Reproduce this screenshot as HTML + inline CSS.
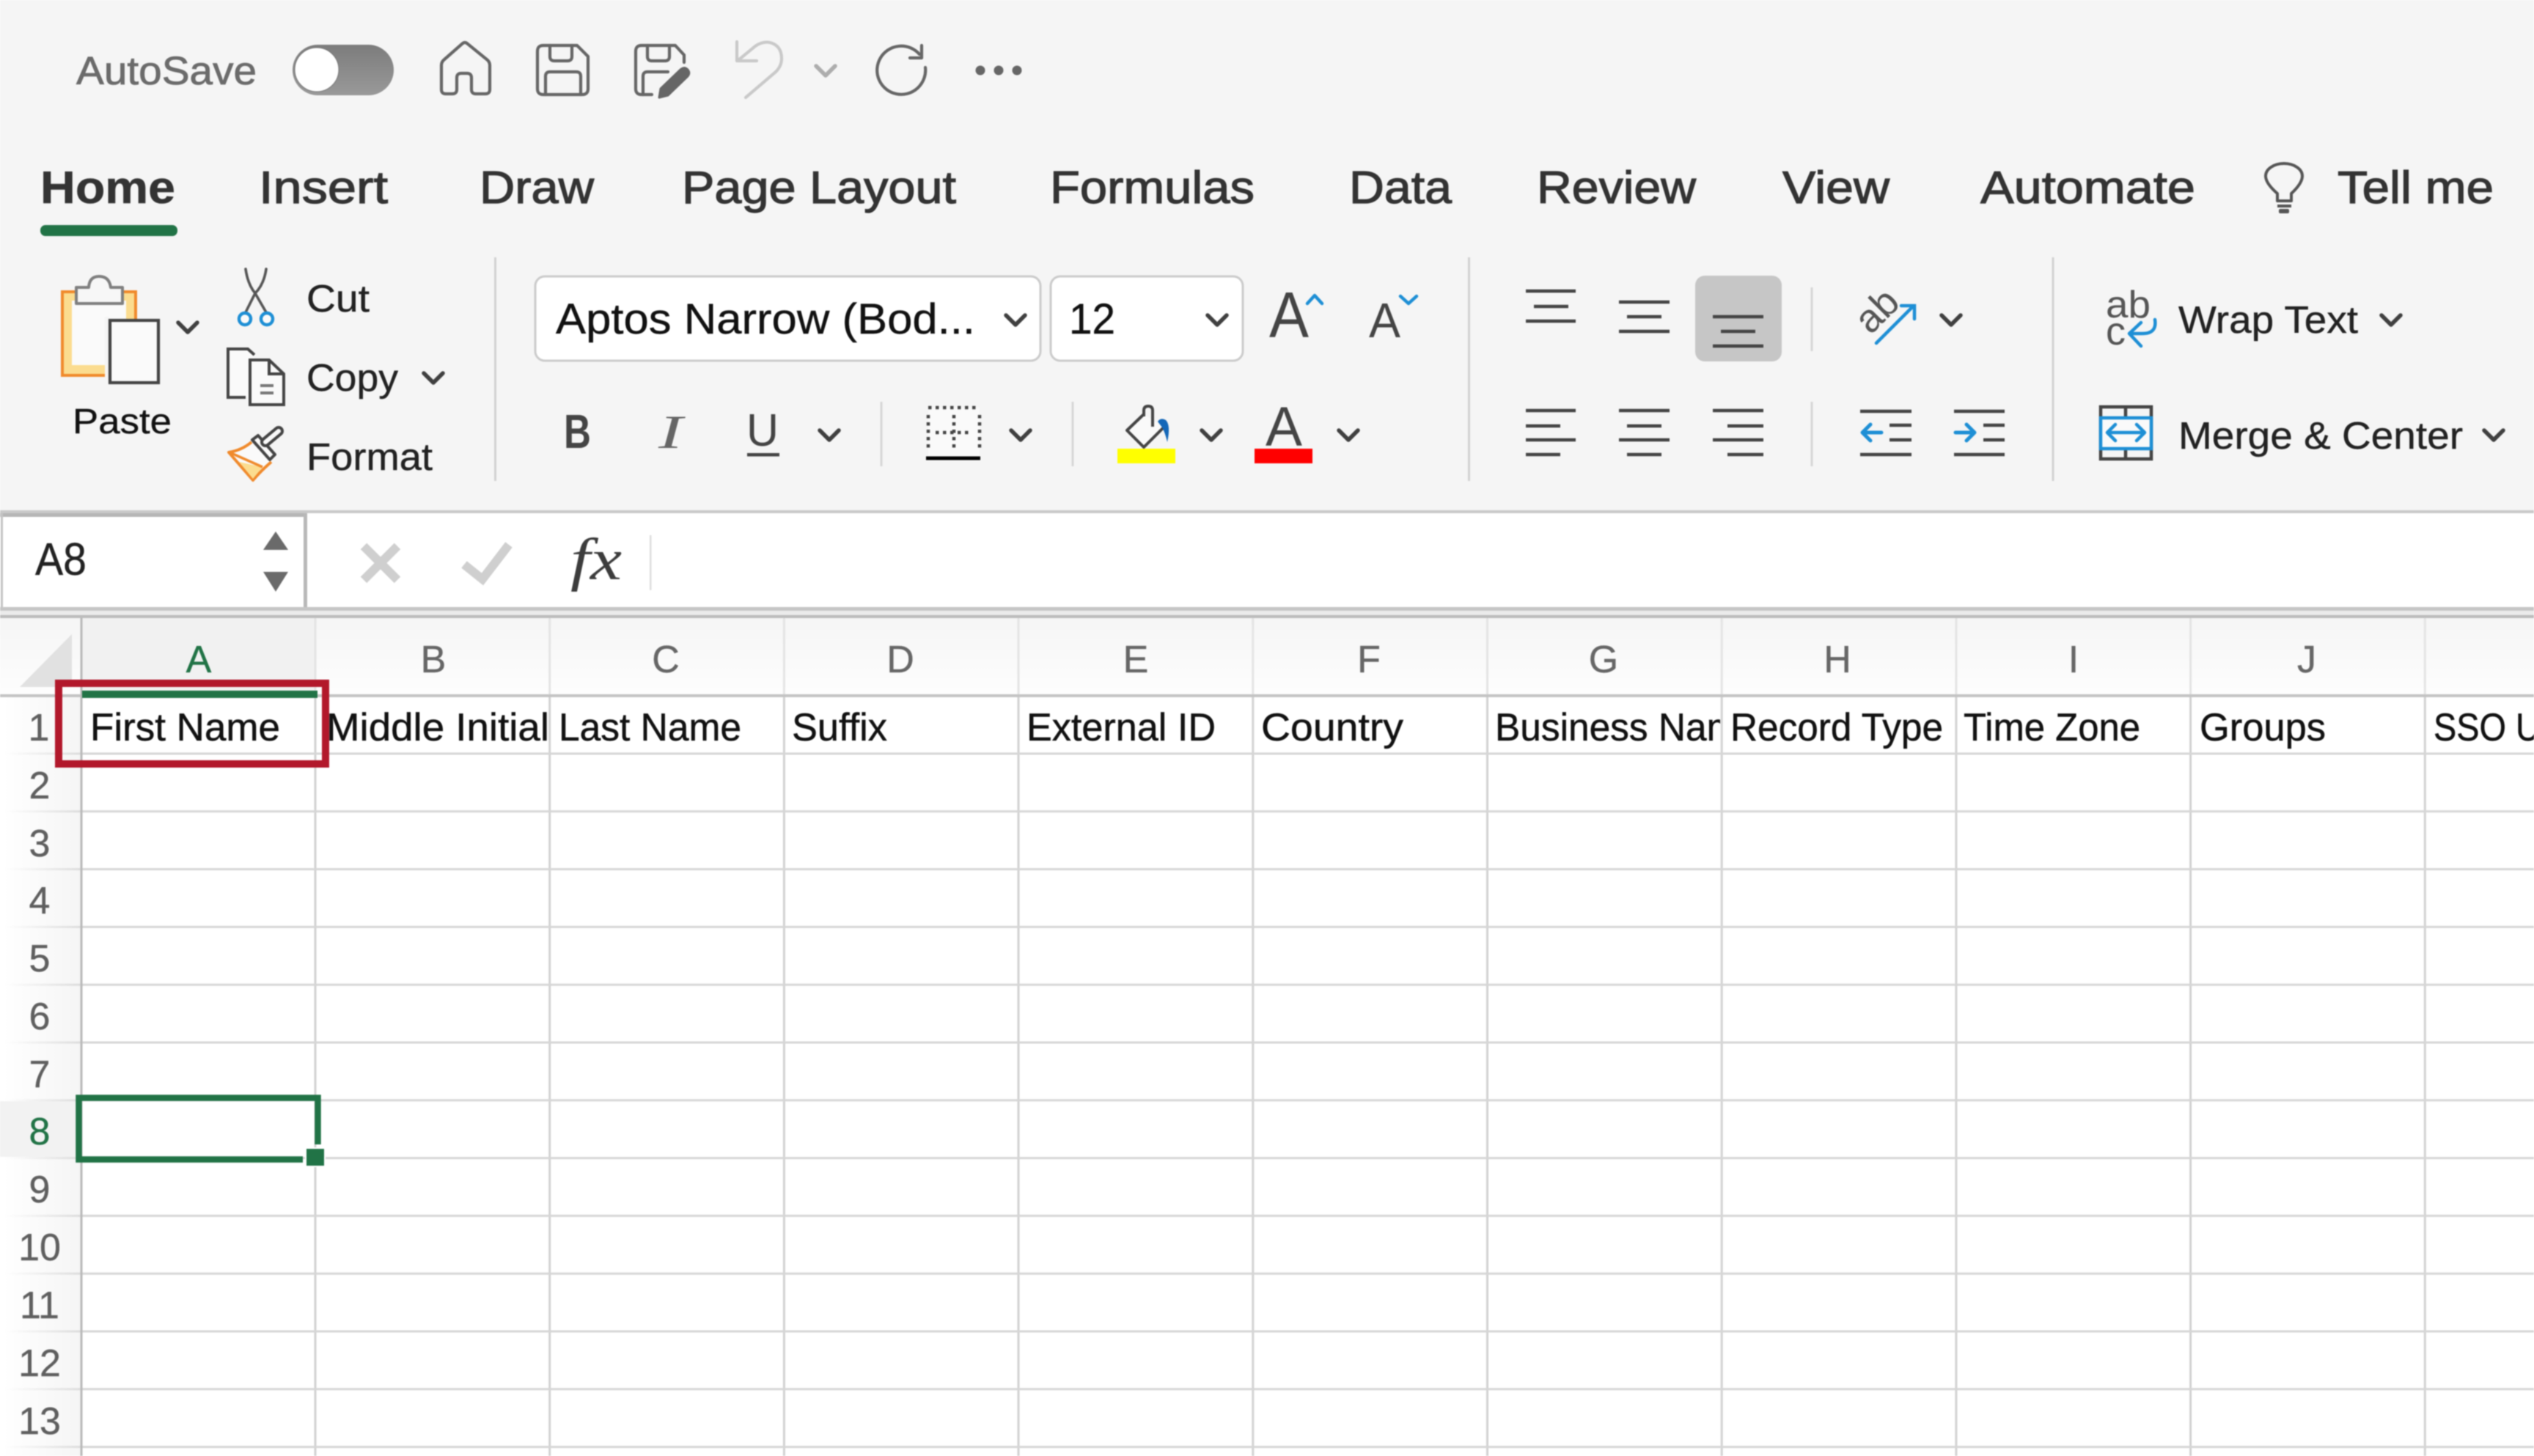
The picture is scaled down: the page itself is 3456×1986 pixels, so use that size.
<!DOCTYPE html>
<html lang="en">
<head>
<meta charset="utf-8">
<title>Excel</title>
<style>
html,body{margin:0;padding:0;width:3456px;height:1986px;overflow:hidden;background:#fff}
svg{display:block;position:absolute;left:0;top:0;filter:blur(.9px)}
text{font-family:"Liberation Sans",sans-serif}
.tab{font-size:62px;fill:#333;stroke:#333;stroke-width:1.2px}
.rb{font-size:52px;fill:#222;stroke:#222;stroke-width:.4px}
.cell{font-size:53px;fill:#111;stroke:#111;stroke-width:.5px}
.col{font-size:52px;fill:#666;text-anchor:middle;stroke:#666;stroke-width:.4px}
.row{font-size:52px;fill:#5f5f5f;text-anchor:middle;stroke:#5f5f5f;stroke-width:.4px}
</style>
</head>
<body>
<svg xmlns="http://www.w3.org/2000/svg" width="3456" height="1986" viewBox="0 0 3456 1986">
<defs>
<linearGradient id="hdr" x1="0" y1="0" x2="0" y2="1"><stop offset="0" stop-color="#f5f5f5"/><stop offset="1" stop-color="#fdfdfd"/></linearGradient>
<linearGradient id="rowh" x1="0" y1="0" x2="1" y2="0"><stop offset="0" stop-color="#ffffff"/><stop offset="1" stop-color="#f5f5f5"/></linearGradient>
<linearGradient id="fade" x1="0" y1="0" x2="1" y2="0"><stop offset="0" stop-color="#ffffff"/><stop offset="1" stop-color="#dcdcdc"/></linearGradient>
<linearGradient id="tog" x1="0" y1="0" x2="0" y2="1"><stop offset="0" stop-color="#7c7c7c"/><stop offset="1" stop-color="#999"/></linearGradient>
<path id="ch" d="M-13 -7L0 6L13 -7" fill="none" stroke="#404040" stroke-width="5.5" stroke-linecap="round" stroke-linejoin="round"/>
<clipPath id="biz"><rect x="2030" y="950" width="316" height="78"/></clipPath>
<clipPath id="mid"><rect x="440" y="950" width="309" height="78"/></clipPath>
</defs>

<!-- ribbon bg -->
<rect x="0" y="0" width="3456" height="698" fill="#f5f5f5"/>

<!-- quick access -->
<text x="104" y="115" font-size="54" fill="#6b6b6b" stroke="#6b6b6b" stroke-width=".8" textLength="246" lengthAdjust="spacingAndGlyphs">AutoSave</text>
<rect x="399" y="61" width="138" height="69" rx="34.5" fill="url(#tog)"/>
<circle cx="432" cy="95" r="30" fill="#ffffff" stroke="#777" stroke-width="1"/>
<g fill="none" stroke="#666" stroke-width="4.2" stroke-linejoin="round" stroke-linecap="round">
<path d="M630 60Q634 56 638 60L665 82Q668 85 668 89V122Q668 128 662 128H649Q643 128 643 122V106Q643 100 637 100H629Q623 100 623 106V122Q623 128 617 128H608Q602 128 602 122V89Q602 85 605 82Z"/>
<path d="M741 62H787L802 77V121Q802 129 794 129H741Q733 129 733 121V70Q733 62 741 62Z"/>
<path d="M750 62V77Q750 83 756 83H774Q780 83 780 77V62"/>
<path d="M744 129V104Q744 98 750 98H786Q792 98 792 104V129"/>
<path d="M889 129H875Q867 129 867 121V70Q867 62 875 62H921L933 75V85"/>
<path d="M883 62V77Q883 83 889 83H907Q913 83 913 77V62"/>
<path d="M877 129V104Q877 98 883 98H911"/>
<path d="M1262 92A33 33 0 1 1 1254 74"/>
<path d="M1257 62V79H1241"/>
</g>
<path d="M899 133L901 121L927 96Q933 90 938 95Q942 100 937 105L911 130Z" fill="#666" stroke="#666" stroke-width="3" stroke-linejoin="round"/>
<g fill="none" stroke="#c9c9c9" stroke-width="4.2" stroke-linecap="round" stroke-linejoin="round">
<path d="M1005 57V83H1032"/>
<path d="M1007 82L1030 63Q1040 56 1050 58Q1066 62 1066 80Q1066 90 1058 98L1017 133"/>
</g>
<use href="#ch" x="1126" y="97" style="opacity:.4"/>
<circle cx="1337" cy="96" r="6.5" fill="#666"/><circle cx="1362" cy="96" r="6.5" fill="#666"/><circle cx="1387" cy="96" r="6.5" fill="#666"/>

<!-- tabs -->
<text x="55" y="277" class="tab" font-weight="bold" textLength="184" lengthAdjust="spacingAndGlyphs" style="stroke-width:.6px">Home</text>
<rect x="55" y="307" width="187" height="15" rx="7" fill="#217346"/>
<text x="353" y="277" class="tab" textLength="176" lengthAdjust="spacingAndGlyphs">Insert</text>
<text x="654" y="277" class="tab" textLength="156" lengthAdjust="spacingAndGlyphs">Draw</text>
<text x="930" y="277" class="tab" textLength="374" lengthAdjust="spacingAndGlyphs">Page Layout</text>
<text x="1432" y="277" class="tab" textLength="279" lengthAdjust="spacingAndGlyphs">Formulas</text>
<text x="1840" y="277" class="tab" textLength="140" lengthAdjust="spacingAndGlyphs">Data</text>
<text x="2096" y="277" class="tab" textLength="217" lengthAdjust="spacingAndGlyphs">Review</text>
<text x="2431" y="277" class="tab" textLength="146" lengthAdjust="spacingAndGlyphs">View</text>
<text x="2701" y="277" class="tab" textLength="293" lengthAdjust="spacingAndGlyphs">Automate</text>
<text x="3188" y="277" class="tab" textLength="213" lengthAdjust="spacingAndGlyphs">Tell me</text>
<g fill="none" stroke="#555" stroke-width="4" stroke-linejoin="round">
<path d="M3106 270V260Q3090 246 3090 236A25 17 0 0 1 3140 236Q3140 246 3125 260V270Z" transform="translate(0,4)"/>
<path d="M3106 281H3125" stroke-width="4"/>
</g>
<rect x="3108" y="285" width="14" height="6" rx="2" fill="#555"/>

<!-- clipboard -->
<rect x="85" y="398" width="100" height="114" fill="#fbdc8f" stroke="#f08a2c" stroke-width="4"/>
<rect x="98" y="410" width="74" height="88" fill="#fafafa"/>
<rect x="172" y="410" width="11" height="28" fill="#fbdc8f"/>
<path d="M104 392H121Q122 377 135 377Q149 377 151 392H167V414H104Z" fill="#f7f7f7" stroke="#7f7f7f" stroke-width="4" stroke-linejoin="round"/>
<rect x="143" y="432" width="6" height="92" fill="#f5f5f5"/>
<rect x="150" y="437" width="66" height="85" fill="#fafafa" stroke="#444" stroke-width="4.2"/>
<use href="#ch" x="256" y="447"/>
<text x="99" y="591" class="rb" textLength="135" lengthAdjust="spacingAndGlyphs" style="font-size:48px;fill:#111">Paste</text>

<!-- scissors -->
<g fill="none" stroke="#555" stroke-width="3.6" stroke-linecap="round">
<path d="M335 367Q338 388 348 400L363 426"/>
<path d="M363 367Q360 388 348 400L335 426"/>
</g>
<circle cx="334" cy="435" r="8" fill="#fafafa" stroke="#1e8fd5" stroke-width="4.4"/>
<circle cx="364" cy="435" r="8" fill="#fafafa" stroke="#1e8fd5" stroke-width="4.4"/>
<text x="418" y="425" class="rb" textLength="86" lengthAdjust="spacingAndGlyphs">Cut</text>

<!-- copy -->
<g stroke="#444" stroke-width="4" stroke-linejoin="miter">
<path d="M335 542H311V476H338L347 483V491H341V542Z" fill="#fafafa" stroke="none"/>
<path d="M335 542H311V476H338L347 484" fill="none"/>
<path d="M341 491H367L387 510V552H341Z" fill="#fafafa"/>
<path d="M367 491V510H387" fill="none"/>
</g>
<path d="M355 526H373M355 536H373" stroke="#777" stroke-width="4"/>
<text x="418" y="533" class="rb" textLength="125" lengthAdjust="spacingAndGlyphs">Copy</text>
<use href="#ch" x="591" y="516"/>

<!-- format painter -->
<path d="M343 603Q330 614 312 617L345 655Q356 642 370 630" fill="#fafafa" stroke="#f08a2c" stroke-width="4" stroke-linejoin="round"/>
<path d="M326 630L358 637L345 653Z" fill="#fbdc8f"/>
<path d="M313 617L358 637" stroke="#f08a2c" stroke-width="3.5"/>
<path d="M344 600L352 594L375 620L368 627Z" fill="#fafafa" stroke="#444" stroke-width="4" stroke-linejoin="round"/>
<path d="M362 603L380 588" stroke="#444" stroke-width="14" stroke-linecap="round"/>
<path d="M362 603L380 588" stroke="#fafafa" stroke-width="6" stroke-linecap="round"/>
<text x="418" y="641" class="rb" textLength="172" lengthAdjust="spacingAndGlyphs">Format</text>

<!-- separators -->
<path d="M675.5 351V656M2003.5 351V656M2800 351V656" stroke="#d2d2d2" stroke-width="3"/>
<path d="M1202 548V636M1463 548V636M2471 392V479M2471 548V636" stroke="#d6d6d6" stroke-width="3"/>

<!-- font boxes -->
<rect x="730" y="377" width="689" height="115" rx="13" fill="#fff" stroke="#cbcbcb" stroke-width="3"/>
<rect x="1433" y="377" width="262" height="115" rx="13" fill="#fff" stroke="#cbcbcb" stroke-width="3"/>
<text x="758" y="455" font-size="58" fill="#111" stroke="#111" stroke-width=".4" textLength="572" lengthAdjust="spacingAndGlyphs">Aptos Narrow (Bod...</text>
<text x="1458" y="455" font-size="58" fill="#111" stroke="#111" stroke-width=".4" textLength="63" lengthAdjust="spacingAndGlyphs">12</text>
<use href="#ch" x="1385" y="437"/>
<use href="#ch" x="1660" y="437"/>

<!-- grow / shrink -->
<text x="1731" y="460" font-size="88" fill="#444" textLength="54" lengthAdjust="spacingAndGlyphs">A</text>
<text x="1867" y="460" font-size="67" fill="#444" textLength="43" lengthAdjust="spacingAndGlyphs">A</text>
<path d="M1783 414L1793 403L1803 414M1910 404L1921 414L1932 404" fill="none" stroke="#1e8fd5" stroke-width="4.5" stroke-linecap="round" stroke-linejoin="round"/>

<!-- BIU -->
<text x="769" y="611" font-size="65" font-weight="bold" fill="#444" textLength="37" lengthAdjust="spacingAndGlyphs">B</text>
<text x="898" y="611" font-size="65" fill="#666" style="font-family:'Liberation Serif',serif;font-style:italic" textLength="33" lengthAdjust="spacingAndGlyphs">I</text>
<text x="1018" y="608" font-size="62" fill="#444" textLength="44" lengthAdjust="spacingAndGlyphs">U</text>
<rect x="1019" y="618" width="44" height="4.5" fill="#444"/>
<use href="#ch" x="1131" y="594"/>

<!-- borders -->
<rect x="1266" y="556" width="70" height="69" fill="#fafafa"/>
<path d="M1266 556H1336M1266 566V616M1336 566V616M1301 566V616M1276 590H1326" fill="none" stroke="#444" stroke-width="4.5" stroke-dasharray="4.5 5.5"/>
<rect x="1263" y="622.5" width="74" height="5" fill="#000"/>
<use href="#ch" x="1392" y="594"/>

<!-- fill color -->
<path d="M1560 565L1537 587L1560 610L1587 583" fill="#fafafa" stroke="#444" stroke-width="4" stroke-linejoin="round"/>
<path d="M1560 568V560Q1560 554 1566 554Q1572 554 1572 560V582" fill="none" stroke="#444" stroke-width="4"/>
<path d="M1579 575Q1583 569 1590 573Q1597 580 1592 603Q1589 590 1585 583Z" fill="#1467b8"/>
<rect x="1524" y="612" width="79" height="20" fill="#ffff00"/>
<use href="#ch" x="1652" y="594"/>

<!-- font colour -->
<text x="1726" y="608" font-size="76" fill="#444" textLength="50" lengthAdjust="spacingAndGlyphs">A</text>
<rect x="1711" y="612" width="79" height="20" fill="#ff0000"/>
<use href="#ch" x="1839" y="594"/>

<!-- alignment -->
<rect x="2312" y="376" width="118" height="117" rx="13" fill="#c6c6c6"/>
<g stroke="#444" stroke-width="4.4">
<path d="M2081 397H2149M2092 418H2139M2081 438H2149"/>
<path d="M2208 412H2277M2219 432H2266M2208 452H2277"/>
<path d="M2336 432H2405M2347 452H2394M2336 472H2405"/>
<path d="M2081 560H2149M2081 581H2128M2081 600H2149M2081 620H2128"/>
<path d="M2208 560H2277M2219 581H2266M2208 600H2277M2219 620H2266"/>
<path d="M2336 560H2405M2356 581H2405M2336 600H2405M2356 620H2405"/>
<path d="M2537 561H2607M2577 580H2607M2577 600H2607M2537 620H2607"/>
<path d="M2665 561H2734M2705 580H2734M2705 600H2734M2665 620H2734"/>
</g>
<g fill="none" stroke="#1e8fd5" stroke-width="5" stroke-linecap="round" stroke-linejoin="round">
<path d="M2566 590H2540M2551 579L2540 590L2551 601"/>
<path d="M2667 590H2693M2682 579L2693 590L2682 601"/>
</g>

<!-- orientation -->
<text x="2559" y="442" font-size="54" fill="#555" text-anchor="middle" transform="rotate(-45 2559 423)">ab</text>
<path d="M2559 468L2610 417M2593 417H2611V435" fill="none" stroke="#1e8fd5" stroke-width="4.5" stroke-linecap="round"/>
<use href="#ch" x="2661" y="437"/>

<!-- wrap text -->
<text x="2872" y="433" font-size="52" fill="#555" textLength="61" lengthAdjust="spacingAndGlyphs">ab</text>
<text x="2872" y="470" font-size="54" fill="#555">c</text>
<path d="M2939 436Q2942 455 2922 455H2904M2920 440L2904 455L2920 472" fill="none" stroke="#1e8fd5" stroke-width="4.5" stroke-linecap="round" stroke-linejoin="round"/>
<text x="2971" y="454" class="rb" textLength="245" lengthAdjust="spacingAndGlyphs">Wrap Text</text>
<use href="#ch" x="3261" y="437"/>

<!-- merge -->
<rect x="2865" y="570" width="69" height="42" fill="#fafafa"/>
<rect x="2865" y="555" width="69" height="71" fill="none" stroke="#444" stroke-width="4.5"/>
<path d="M2899 555V570M2899 612V626" stroke="#444" stroke-width="4.5"/>
<rect x="2865" y="570" width="69" height="42" fill="#fafafa" stroke="#1e8fd5" stroke-width="4.5"/>
<path d="M2875 590H2924M2885 579L2874 590L2885 601M2914 579L2925 590L2914 601" fill="none" stroke="#1e8fd5" stroke-width="4.5" stroke-linecap="round" stroke-linejoin="round"/>
<text x="2971" y="612" class="rb" textLength="388" lengthAdjust="spacingAndGlyphs">Merge &amp; Center</text>
<use href="#ch" x="3401" y="594"/>

<!-- formula bar -->
<rect x="0" y="696" width="3456" height="4" fill="#c9c9c9"/>
<rect x="0" y="700" width="3456" height="130" fill="#fff"/>
<rect x="0" y="700" width="418" height="5" fill="#b5b5b5"/>
<rect x="1" y="700" width="3" height="128" fill="#c4c4c4"/>
<rect x="414" y="700" width="5" height="130" fill="#b8b8b8"/>
<text x="48" y="784" font-size="62" fill="#222" stroke="#222" stroke-width=".4" textLength="70" lengthAdjust="spacingAndGlyphs">A8</text>
<path d="M376 725L393 750H359Z" fill="#6a6a6a"/>
<path d="M376 807L393 780H359Z" fill="#6a6a6a"/>
<path d="M496 745L542 791M542 745L496 791" stroke="#cfcfcf" stroke-width="12"/>
<path d="M633 770L658 790L694 743" fill="none" stroke="#cfcfcf" stroke-width="12"/>
<text x="778" y="790" font-size="80" fill="#3c3c3c" style="font-family:'Liberation Serif',serif;font-style:italic" textLength="70" lengthAdjust="spacingAndGlyphs">fx</text>
<rect x="886" y="730" width="2.5" height="75" fill="#dedede"/>
<rect x="0" y="828" width="3456" height="5" fill="#c6c6c6"/>
<rect x="0" y="833" width="3456" height="6" fill="#ebebeb"/>
<rect x="0" y="839" width="3456" height="4" fill="#bcbcbc"/>

<!-- sheet -->
<rect x="0" y="843" width="3456" height="1143" fill="#fff"/>
<rect x="0" y="843" width="3456" height="105" fill="url(#hdr)"/>
<rect x="112" y="843" width="318" height="105" fill="#f1f1f1"/>
<rect x="0" y="948" width="110" height="1038" fill="url(#rowh)"/>
<rect x="0" y="1502" width="110" height="76" fill="#f2f2f2"/>
<path d="M98 865V937H27Z" fill="#e1e1e1"/>

<!-- vertical grid -->
<path d="M430 843V948M749.7 843V948M1069.4 843V948M1389 843V948M1708.8 843V948M2028.5 843V948M2348.2 843V948M2667.9 843V948M2987.6 843V948M3307.3 843V948" stroke="#e4e4e4" stroke-width="3"/>
<path d="M430 948V1986M749.7 948V1986M1069.4 948V1986M1389 948V1986M1708.8 948V1986M2028.5 948V1986M2348.2 948V1986M2667.9 948V1986M2987.6 948V1986M3307.3 948V1986" stroke="#d2d2d2" stroke-width="3"/>
<!-- horizontal grid -->
<rect x="0" y="947" width="3456" height="4" fill="#c4c4c4"/>
<path d="M111 1028H3456M111 1106.8H3456M111 1185.6H3456M111 1264.4H3456M111 1343.2H3456M111 1422H3456M111 1500.8H3456M111 1579.6H3456M111 1658.4H3456M111 1737.2H3456M111 1816H3456M111 1894.8H3456M111 1973.6H3456" stroke="#d6d6d6" stroke-width="3"/>
<g fill="url(#fade)">
<rect x="5" y="1026.5" width="106" height="3"/><rect x="5" y="1105.3" width="106" height="3"/><rect x="5" y="1184.1" width="106" height="3"/><rect x="5" y="1262.9" width="106" height="3"/><rect x="5" y="1341.7" width="106" height="3"/><rect x="5" y="1420.5" width="106" height="3"/><rect x="5" y="1499.3" width="106" height="3"/><rect x="5" y="1578.1" width="106" height="3"/><rect x="5" y="1656.9" width="106" height="3"/><rect x="5" y="1735.7" width="106" height="3"/><rect x="5" y="1814.5" width="106" height="3"/><rect x="5" y="1893.3" width="106" height="3"/><rect x="5" y="1972.1" width="106" height="3"/>
</g>
<rect x="109.5" y="843" width="3" height="1143" fill="#b9b9b9"/>

<!-- column headers -->
<text x="271" y="917" class="col" style="fill:#217346;stroke:#217346">A</text>
<text x="591" y="917" class="col">B</text>
<text x="908" y="917" class="col">C</text>
<text x="1228" y="917" class="col">D</text>
<text x="1549" y="917" class="col">E</text>
<text x="1867" y="917" class="col">F</text>
<text x="2187" y="917" class="col">G</text>
<text x="2506" y="917" class="col">H</text>
<text x="2828" y="917" class="col">I</text>
<text x="3146" y="917" class="col">J</text>
<text x="3470" y="917" class="col">K</text>

<!-- row headers -->
<text x="53" y="1010" class="row">1</text>
<text x="54" y="1089" class="row">2</text>
<text x="54" y="1168" class="row">3</text>
<text x="54" y="1246" class="row">4</text>
<text x="54" y="1325" class="row">5</text>
<text x="54" y="1404" class="row">6</text>
<text x="54" y="1483" class="row">7</text>
<text x="54" y="1561" class="row" style="fill:#217346;stroke:#217346">8</text>
<text x="54" y="1640" class="row">9</text>
<text x="54" y="1719" class="row">10</text>
<text x="54" y="1798" class="row">11</text>
<text x="54" y="1877" class="row">12</text>
<text x="54" y="1956" class="row">13</text>

<!-- row 1 cells -->
<text x="123" y="1010" class="cell" textLength="259" lengthAdjust="spacingAndGlyphs">First Name</text>
<g clip-path="url(#mid)"><text x="445" y="1010" class="cell" textLength="304" lengthAdjust="spacingAndGlyphs">Middle Initial</text></g>
<text x="762" y="1010" class="cell" textLength="249" lengthAdjust="spacingAndGlyphs">Last Name</text>
<text x="1080" y="1010" class="cell" textLength="130" lengthAdjust="spacingAndGlyphs">Suffix</text>
<text x="1400" y="1010" class="cell" textLength="258" lengthAdjust="spacingAndGlyphs">External ID</text>
<text x="1720" y="1010" class="cell" textLength="194" lengthAdjust="spacingAndGlyphs">Country</text>
<g clip-path="url(#biz)"><text x="2039" y="1010" class="cell" textLength="360" lengthAdjust="spacingAndGlyphs">Business Name</text></g>
<text x="2360" y="1010" class="cell" textLength="290" lengthAdjust="spacingAndGlyphs">Record Type</text>
<text x="2678" y="1010" class="cell" textLength="241" lengthAdjust="spacingAndGlyphs">Time Zone</text>
<text x="3000" y="1010" class="cell" textLength="172" lengthAdjust="spacingAndGlyphs">Groups</text>
<text x="3319" y="1010" class="cell" textLength="211" lengthAdjust="spacingAndGlyphs">SSO User</text>

<!-- selection -->
<rect x="112" y="942" width="321" height="10" fill="#217346"/>
<path d="M433.5 1561V1497.5H107.5V1581.5H413" fill="none" stroke="#217346" stroke-width="8.5"/>
<rect x="416" y="1565" width="28" height="27" fill="#fff"/>
<rect x="418" y="1567" width="24" height="23" fill="#217346"/>

<!-- red annotation -->
<rect x="80" y="932" width="364" height="110" fill="none" stroke="#b2182b" stroke-width="10"/>
</svg>
</body>
</html>
